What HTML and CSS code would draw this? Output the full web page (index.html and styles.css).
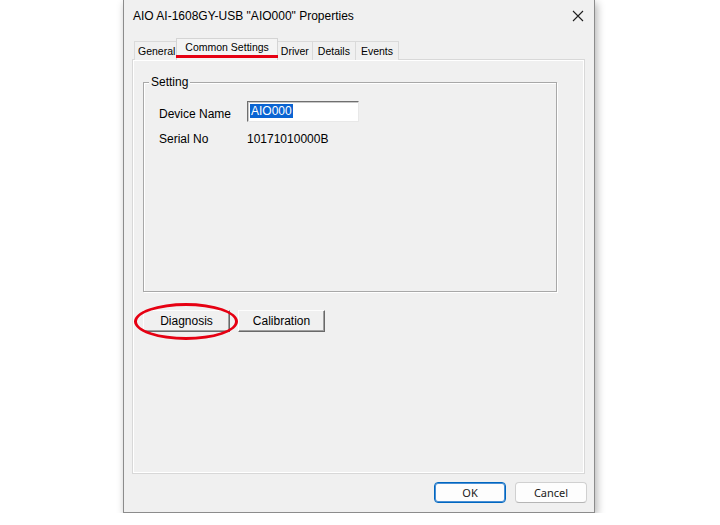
FILE: index.html
```html
<!DOCTYPE html>
<html lang="en">
<head>
    <meta charset="UTF-8">
    <title>AIO AI-1608GY-USB "AIO000" Properties</title>
    <link rel="stylesheet" href="styles.css">
</head>
<body>

<div class="window">
    <div class="titlebar">
        <span class="title">AIO AI-1608GY-USB "AIO000" Properties</span>
        <span class="close">
            <svg width="12" height="12" viewBox="0 0 12 12"><path d="M1 1L11 11M11 1L1 11" stroke="#1f1f1f" stroke-width="1.1" fill="none"/></svg>
        </span>
    </div>

    <div class="tabs">
        <div class="tab">General</div>
        <div class="tab active">Common Settings<span class="mark"></span></div>
        <div class="tab">Driver</div>
        <div class="tab">Details</div>
        <div class="tab">Events</div>
    </div>

    <div class="page">
        <div class="group">
            <span class="legend">Setting</span>
            <div class="field name">
                <span class="label">Device Name</span>
                <div class="input"><span class="sel">AIO000</span></div>
            </div>
            <div class="field serial">
                <span class="label">Serial No</span>
                <span>10171010000B</span>
            </div>
        </div>

        <div class="actions">
            <button class="btn">Diagnosis</button>
            <button class="btn">Calibration</button>
            <span class="circle"></span>
        </div>
    </div>

    <div class="footer">
        <button class="wbtn default">OK</button>
        <button class="wbtn">Cancel</button>
    </div>
</div>

</body>
</html>
```

FILE: styles.css
```css
body {
    margin: 0;
    background: #fff;
    font-family: 'Liberation Sans', Arial, sans-serif;
    color: #000;
}

.window {
    margin-left: 123px;
    width: 472px;
    height: 513px;
    box-sizing: border-box;
    background: #f0f0f0;
    border: 1px solid #8c8c8c;
    border-top: none;
    box-shadow: 2px 3px 8px rgba(0, 0, 0, 0.3);
    display: flex;
    flex-direction: column;
}

.titlebar {
    height: 32px;
    display: flex;
    align-items: center;
    padding: 0 10px 0 9px;
    font-size: 12px;
}

.close {
    margin-left: auto;
    display: flex;
}

.tabs {
    display: flex;
    align-items: flex-end;
    margin-top: 6px;
    margin-bottom: -1px;
    padding-left: 10px;
    position: relative;
    z-index: 1;
}

.tab {
    font-size: 10.5px;
    height: 18px;
    line-height: 18px;
    padding: 0 3px;
    border: 1px solid #dadada;
    border-bottom: none;
    background: #f0f0f0;
    margin-right: -1px;
    white-space: nowrap;
}

.tab:nth-child(4),
.tab:nth-child(5) {
    padding: 0 5px;
}

.tab.active {
    position: relative;
    height: 21px;
    line-height: 17px;
    padding: 0 8px;
    margin: 0 -1px 0 -2px;
    background: #f4f4f4;
    border-color: #d4d4d4;
    z-index: 2;
}

.mark {
    position: absolute;
    left: -1px;
    right: -1px;
    bottom: 2px;
    height: 3px;
    background: #e60012;
}

.page {
    height: 415px;
    box-sizing: border-box;
    margin: 0 9px 0 8px;
    padding: 22px 27px 0 10px;
    border: 1px solid #d8d8d8;
    box-shadow: inset 1px 1px 0 #fff, inset -1px -1px 0 #fff;
    background: #f0f0f0;
}

.group {
    position: relative;
    height: 210px;
    box-sizing: border-box;
    border: 1px solid #a8a8a8;
    box-shadow: inset 1px 1px 0 #fff, 1px 1px 0 #fff;
    padding: 18px 15px;
    font-size: 12px;
}

.legend {
    position: absolute;
    top: -9px;
    left: 5px;
    padding: 0 2px;
    line-height: 16px;
    background: #f0f0f0;
}

.field {
    display: flex;
    align-items: center;
}

.field.name {
    align-items: flex-end;
}

.label {
    width: 88px;
    line-height: 16px;
}

.serial {
    margin-top: 9px;
    line-height: 16px;
}

.input {
    width: 112px;
    height: 21px;
    box-sizing: border-box;
    background: #fff;
    border: 1px solid;
    border-color: #6f6f6f #e8e8e8 #e8e8e8 #6f6f6f;
    box-shadow: inset 1px 1px 0 #c8c8c8;
    padding: 2px 0 0 2px;
    font-size: 12px;
    line-height: 15px;
}

.sel {
    background: #0a64d2;
    color: #fff;
    padding: 0 1px;
}

.actions {
    position: relative;
    display: flex;
    gap: 8px;
    margin-top: 18px;
}

.btn {
    width: 87px;
    height: 22px;
    font-family: inherit;
    font-size: 12px;
    color: #000;
    background: #f0f0f0;
    border: 1px solid;
    border-color: #fdfdfd #696969 #696969 #fdfdfd;
    box-shadow: inset -1px -1px 0 #a0a0a0;
    padding: 0;
}

.circle {
    position: absolute;
    left: -9px;
    top: -7px;
    width: 98px;
    height: 31px;
    border: 3px solid #e60012;
    border-radius: 50%;
}

.footer {
    display: flex;
    justify-content: flex-end;
    gap: 9px;
    margin-top: 8px;
    padding-right: 7px;
}

.wbtn {
    width: 72px;
    height: 21px;
    font-family: 'Noto Sans', 'Liberation Sans', sans-serif;
    font-size: 11px;
    color: #1a1a1a;
    background: #fdfdfd;
    border: 1px solid #d0d0d0;
    border-bottom-color: #b5b5b5;
    border-radius: 4px;
    padding: 0;
}

.wbtn.default {
    border: 1px solid #0067c0;
    box-shadow: inset 0 0 0 1px #4a8fd4;
}
```
